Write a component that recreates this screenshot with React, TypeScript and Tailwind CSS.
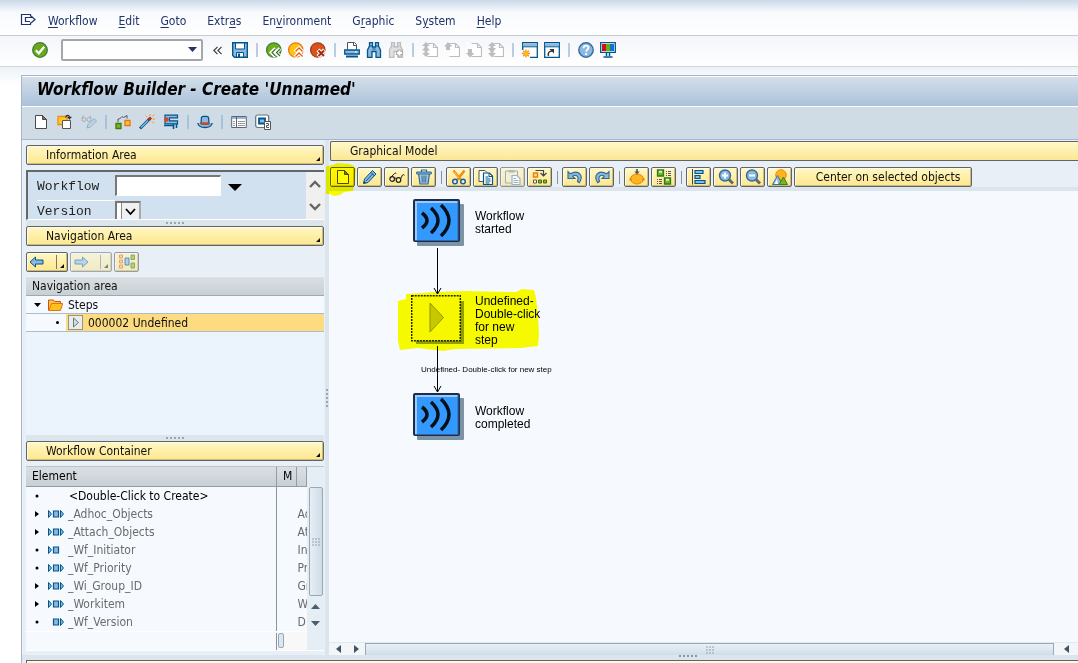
import React from "react";

type IconProps = { children: React.ReactNode; size?: string; box?: string };

function Icon({ children, size = "size-4", box = "0 0 16 16" }: IconProps) {
  return (
    <svg className={`${size} block shrink-0`} viewBox={box} fill="none" aria-hidden="true">
      {children}
    </svg>
  );
}

const BLUE = "#00578f";
const SKY = "#8fb8de";
const GREY = "#bdbdbd";

/* ---------- system toolbar icons ---------- */
const ExitMenuIcon = () => (
  <Icon>
    <path d="M10.500 3.500v-2h-9v10h9v-2" stroke="#20336b" strokeWidth="1.200" />
    <path d="M10 4.500H5.500v4H10" stroke="#20336b" strokeWidth="1.200" />
    <path d="M11 3l4 3.500-4 3.500M10 4.500h3" stroke="#20336b" strokeWidth="1.200" />
  </Icon>
);
const CheckIcon = () => (
  <Icon>
    <circle cx="8" cy="8" r="7.300" fill="#6aa818" stroke="#3e7d3e" strokeWidth="1.300" />
    <path d="M3.800 8.300l3 3 5.400-6.500" stroke="#fff" strokeWidth="2.200" />
  </Icon>
);
const SaveIcon = () => (
  <Icon>
    <path d="M.7.7h14.600v14.600H2.500L.7 13.500z" fill={SKY} stroke={BLUE} strokeWidth="1.400" />
    <path d="M3.500 1h9v6h-9z" fill="#fff" stroke={BLUE} />
    <path d="M4.500 10.500h7V15h-7z" fill="#fff" stroke={BLUE} />
    <path d="M6 11.500h2V15H6z" fill={BLUE} />
  </Icon>
);
const RoundIcon = ({ fill, edge, children }: { fill: string; edge: string; children: React.ReactNode }) => (
  <Icon>
    <circle cx="7.800" cy="8" r="7.200" fill={fill} stroke={edge} strokeWidth="1.300" />
    {children}
  </Icon>
);
const BackIcon = () => (
  <RoundIcon fill="#6fae1b" edge="#3f8040">
    <path d="M9.500 6.500L5.500 10.500l4 4M14 6.500l-4 4 4 4" stroke="#fff" strokeWidth="3.600" />
    <path d="M9.500 7L6 10.500 9.500 14M14 7l-3.500 3.500L14 14" stroke="#3d6b3a" strokeWidth="1.200" />
  </RoundIcon>
);
const UpIcon = () => (
  <RoundIcon fill="#ffc20e" edge="#e8791b">
    <path d="M7 10l4-4 4 4M7 15l4-4 4 4" stroke="#fff" strokeWidth="3.600" />
    <path d="M7.500 9.500L11 6l3.500 3.500M7.500 14.500L11 11l3.500 3.500" stroke="#d9600f" strokeWidth="1.300" />
  </RoundIcon>
);
const CancelIcon = () => (
  <RoundIcon fill="#d8541a" edge="#a93b22">
    <path d="M8 8l6.500 6.500M14.500 8L8 14.500" stroke="#fff" strokeWidth="4.200" />
    <path d="M8.500 8.500l5.500 5.500M14 8.500L8.500 14" stroke="#a12a12" strokeWidth="2" />
  </RoundIcon>
);
const PrintIcon = () => (
  <Icon>
    <path d="M3.500 7.500v-7h7l2 2v5" fill="#fff" stroke="#555" />
    <path d="M9.500.5v3h3" stroke="#555" />
    <path d="M.7 8h14.600v4H.7z" fill={SKY} stroke={BLUE} strokeWidth="1.300" />
    <path d="M2 14.500h12" stroke={BLUE} strokeWidth="2" />
    <path d="M11 10h2" stroke="#fff" />
  </Icon>
);
const binoculars = "M1.500 15.500V8l2-4V.7h3V5h3V.7h3V4l2 4v7.500h-4.500V9.500h-4v6z";
const FindIcon = () => (
  <Icon>
    <path d={binoculars} fill={SKY} stroke={BLUE} strokeWidth="1.300" />
    <path d="M3.500 4h3M9.500 4h3M6.500 7h3" stroke={BLUE} />
  </Icon>
);
const FindNextIcon = () => (
  <Icon>
    <path d={binoculars} fill="#e1e1e1" stroke={GREY} strokeWidth="1.300" />
    <path d="M3.500 4h3M9.500 4h3" stroke={GREY} />
    <path d="M11.500 7.500v7M8 11h7" stroke="#aaa" strokeWidth="4" />
    <path d="M11.500 8.500v5M9 11h5" stroke="#fff" strokeWidth="2" />
  </Icon>
);
const PageMoveIcon = ({ up, down, double }: { up?: boolean; down?: boolean; double?: boolean }) => (
  <Icon>
    <path d="M5.500 1.500h6l4 4v9h-10" fill="#fff" stroke={GREY} strokeWidth="1.200" />
    <path d="M11.500 1.500v4h4" stroke={GREY} strokeWidth="1.200" />
    {!double && <path d="M0 0h5v16H0z" fill="#fafbfd" />}
    {!double && up && <path d="M4 0l4.500 4.500h-2.500V8h-4V4.500H0z" fill={GREY} />}
    {!double && down && <path d="M4 15.500L8.500 11h-2.500V7h-4v4H0z" fill={GREY} />}
    {double && up && <path d="M4 0l4 4H5.500v1.500L8 8.500H5.500V11H8l-4 4-4-4h2.500V8.500H0l2.500-3V4H0z" fill={GREY} />}
    {double && down && <path d="M4 0l4 4H5.500v2H8L5.500 9.500V11H8l-4 4.500L0 11h2.500V9.500L0 6h2.500V4H0z" fill={GREY} />}
  </Icon>
);
const windowFrame = (
  <>
    <path d="M.7.7h14.600v14.600H.7z" fill="#fff" stroke={BLUE} strokeWidth="1.300" />
    <path d="M1.300 1.300h13.400v3H1.300z" fill={SKY} />
    <path d="M1 4.800h14" stroke={BLUE} />
  </>
);
const NewSessionIcon = () => (
  <Icon>
    {windowFrame}
    <path d="M0 8h8v8H0z" fill="#fff" />
    <path d="M4 7.500v8M0 11.500h8M1.200 8.700l5.600 5.600M6.800 8.700l-5.600 5.600" stroke="#ee8a0a" strokeWidth="1.300" />
    <circle cx="4" cy="11.500" r="2.300" fill="#ffb81c" />
  </Icon>
);
const ShortcutIcon = () => (
  <Icon>
    {windowFrame}
    <path d="M4.500 14c-1-3 .5-5 4-5" stroke="#333" strokeWidth="1.500" />
    <path d="M5.500 7H10v4.500z" fill="#333" />
  </Icon>
);
const HelpIcon = () => (
  <Icon>
    <circle cx="8" cy="8" r="7.200" fill={SKY} stroke="#2e6da4" strokeWidth="1.400" />
    <path d="M5.500 6.200c0-3.400 5-3.400 5-.4 0 1.700-2.400 1.900-2.400 4" stroke="#fff" strokeWidth="1.800" />
    <path d="M7.200 11.200h1.900v1.800H7.200z" fill="#fff" />
  </Icon>
);
const LayoutIcon = () => (
  <Icon>
    <path d="M.7.700h14.600v9.600H.7z" fill="#fff" stroke={BLUE} strokeWidth="1.300" />
    <path d="M2 2h4v7H2z" fill="#d40f14" />
    <path d="M6 2h4v7H6z" fill="#6cae12" />
    <path d="M10 2h4v7h-4z" fill="#0a78c8" />
    <path d="M6.500 10.500v3.500M9.500 10.500v3.500M3.500 15h9" stroke={BLUE} strokeWidth="1.500" />
  </Icon>
);

/* ---------- application toolbar icons ---------- */
const NewDocIcon = () => (
  <Icon>
    <path d="M2.500 1.500h7l4 4v9h-11z" fill="#fff" stroke="#4a4a4a" />
    <path d="M9.500 1.500v4h4z" fill="#777" stroke="#4a4a4a" />
  </Icon>
);
const OtherObjectIcon = () => (
  <Icon>
    <path d="M1 2.500h9v8H1z" fill="#ffc72c" stroke="#f08c10" strokeWidth="1.300" />
    <path d="M5.500 6.500h8v8h-8z" fill="#fff" stroke="#555" />
    <path d="M8.500 3.500C9 .8 12 .8 12.500 3" stroke="#333" strokeWidth="1.200" />
    <path d="M10 2.800h5L12.500 5.800z" fill="#333" />
  </Icon>
);
const DisplayChangeIcon = () => (
  <Icon>
    <circle cx="3" cy="5.500" r="2" stroke="#a8adb2" />
    <circle cx="8" cy="5.500" r="2" stroke="#a8adb2" />
    <path d="M1 4.500L2.500 1.500M10 4.500L9 1.500" stroke="#a8adb2" />
    <path d="M6 14l1-3.500 6-6L15.500 7l-6 6z" fill="#bcd3e4" stroke="#8fb2c9" />
  </Icon>
);
const HierarchyIcon = () => (
  <Icon>
    <path d="M1 9.500h5v5H1z" fill="#7cb518" stroke="#3e7a10" strokeWidth="1.300" />
    <path d="M10 6.500h5v5h-5z" fill="#ffc72c" stroke="#e8741a" strokeWidth="1.300" />
    <path d="M3 8V5h1.500L7 2.500 8.500 3.500 12 1.500v3" stroke="#555" />
  </Icon>
);
const WandIcon = () => (
  <Icon>
    <path d="M1 14.500L11 4.500" stroke={BLUE} strokeWidth="3" />
    <path d="M2 13.500L9 6.500" stroke={SKY} strokeWidth="1.200" />
    <path d="M9.500 6L12 3.500" stroke="#cc2222" strokeWidth="3" />
    <path d="M8 3L6.500 1.500M11 2V0M13.500 2.500L15.500.5M13.500 5H16M13 7.500l2 2" stroke="#f09a10" />
  </Icon>
);
const TestIcon = () => (
  <Icon>
    <path d="M2 1.200h12.500v2.600H6.500v3h8v3H2z" fill={SKY} stroke={BLUE} strokeWidth="1.200" />
    <path d="M1 11.500h9.500M10.500 10v5M13.500 10v4" stroke={BLUE} strokeWidth="1.600" />
    <circle cx="3.500" cy="5.500" r="2.200" fill="#d8422b" />
  </Icon>
);
const HatIcon = () => (
  <Icon>
    <path d="M.8 9c1 6 13.400 6 14.400 0" fill={SKY} stroke={BLUE} strokeWidth="1.300" />
    <path d="M4 9.500l.5-6C5 1.500 7 2.500 8 2.500s3-1 3.500 1l.5 6z" fill={SKY} stroke={BLUE} strokeWidth="1.300" />
    <path d="M4 8.500h8v2.500H4z" fill="#d0441e" />
  </Icon>
);
const ListIcon = () => (
  <Icon>
    <path d="M.7 2.500h14.600v11H.7z" fill="#fff" stroke="#5b6670" />
    <path d="M1 3h14v2H1z" fill={SKY} />
    <path d="M5.500 3v10" stroke="#5b6670" />
    <path d="M2 7.500h2M2 9.500h2M2 11.500h2M7 7.500h7M7 9.500h7M7 11.500h7" stroke="#999" />
  </Icon>
);
const WindowTwoIcon = () => (
  <Icon>
    <rect x=".7" y="1" width="13" height="12.500" rx="2" fill="#fff" stroke="#62717c" strokeWidth="1.200" />
    <path d="M4 4.500h6v5H4z" fill={SKY} stroke={BLUE} strokeWidth="1.800" />
    <path d="M9.500 7.500h6v8h-6z" fill="#fff" stroke="#555" />
    <path d="M11 9.500h2.500v2H11.500v2H14" stroke="#555" />
  </Icon>
);

/* ---------- graph toolbar icons ---------- */
const PencilIcon = () => (
  <Icon>
    <path d="M1.500 14.500l1-4.500 8-8.500 3.500 3.500-8 8.500z" fill={SKY} stroke={BLUE} />
    <path d="M9 3.500L12.500 7M4 12l7-7.500" stroke={BLUE} />
    <path d="M1.500 14.500l.6-2.500 2 2z" fill="#333" />
  </Icon>
);
const GlassesIcon = () => (
  <Icon>
    <circle cx="3.200" cy="10" r="2.300" stroke="#222" strokeWidth="1.200" />
    <circle cx="9.500" cy="11" r="2.300" stroke="#222" strokeWidth="1.200" />
    <path d="M5.300 9.500c.8-.8 1.500-.6 2 .5M1.200 9L5.500 4.500c.8-.8 1.500-.5 1.500.5M11.500 10L13.500 6c.5-.8 1.500-.6 1.800.5" stroke="#222" />
  </Icon>
);
const TrashIcon = () => (
  <Icon>
    <path d="M2.500 4.500h11l-1.500 10.500H4z" fill="#a9c6e0" stroke="#2b6a98" strokeWidth="1.200" />
    <path d="M.7 3h14.600v2H.7z" fill={SKY} stroke="#2b6a98" />
    <path d="M5.500 3V1h5v2" stroke="#2b6a98" strokeWidth="1.200" />
    <path d="M6 6.500l.3 7M10 6.500l-.3 7M8 6.500v7" stroke="#2b6a98" />
  </Icon>
);
const CutIcon = () => (
  <Icon>
    <path d="M2.500 1.500l7 9M13.500 1.500l-7 9" stroke="#f08a12" strokeWidth="2.400" />
    <path d="M3 2.500l5 6.500" stroke="#ffc94d" />
    <circle cx="4" cy="12.500" r="2.300" fill="#e7eff7" stroke="#205f94" strokeWidth="1.500" />
    <circle cx="12" cy="12.500" r="2.300" fill="#e7eff7" stroke="#205f94" strokeWidth="1.500" />
  </Icon>
);
const CopyIcon = () => (
  <Icon>
    <path d="M1 1.500h6l3 3v8H1z" fill="#fff" stroke="#555" />
    <path d="M5.500 4h6l3 3v8.500h-9z" fill="#fff" stroke={BLUE} strokeWidth="1.200" />
    <path d="M11 4v3.500h3.500M7.500 8h3M7.500 10h5M7.500 12h5M7.500 14h4" stroke={BLUE} />
  </Icon>
);
const PasteIcon = () => (
  <Icon>
    <path d="M.5 2h12v12H.5z" fill="#f9eec2" stroke="#888" />
    <path d="M3.500 1h6v2.500h-6z" fill="#999" />
    <path d="M7 6.500h5l3 3v6H7z" fill="#fff" stroke="#6f98a8" strokeWidth="1.200" />
    <path d="M8.500 9.500h2.500M8.500 11.500h5M8.500 13.500h5" stroke="#6f98a8" />
  </Icon>
);
const BlockIcon = () => (
  <Icon>
    <path d="M1.500 4h4v4h-4z" fill="#ffe08a" stroke="#ee7c10" strokeWidth="1.400" />
    <path d="M1.500 11h3v3h-3z" fill="#fff" stroke="#555" />
    <path d="M6.500 11h3v3h-3zM11.500 11h3v3h-3z" fill="#87ba25" stroke="#3d6a15" />
    <path d="M3.500 1.500h8V6M8.500 4l3 3 3-3" stroke="#444" strokeWidth="1.200" />
  </Icon>
);
const UndoIcon = ({ flip }: { flip?: boolean }) => (
  <Icon>
    <g transform={flip ? "translate(16 0) scale(-1 1)" : undefined}>
      <path d="M1 2.500v7h7L5.700 7.300C8.500 5.200 12.500 6.500 10.500 12.500l1.800 1.200C17 7 12 0 3.300 4.800z" fill={SKY} stroke="#2b6a98" strokeWidth="1.100" />
    </g>
  </Icon>
);
const CheckSyntaxIcon = () => (
  <Icon>
    <ellipse cx="8" cy="10" rx="6.500" ry="5" fill="#ffb51f" stroke="#ec8010" />
    <path d="M.5 10.500h2M13.500 10.500h2" stroke="#e77c10" strokeWidth="2" />
    <path d="M8 0v4" stroke="#555" strokeWidth="1.600" />
    <path d="M5.300 2.500h5.400L8 5.500z" fill="#555" />
  </Icon>
);
const OptionsIcon = () => (
  <Icon>
    <path d="M1.500 1h6v6h-6zM8.500 9h6v6h-6z" fill="#77b424" stroke="#2e7b18" strokeWidth="1.300" />
    <path d="M3 1.700h3v2H3zM10 9.700h3v2h-3z" fill="#d8efc3" />
    <path d="M10 2.500h1M12 2.500h3M10 4.500h1M12 4.500h3M10 6.500h1M12 6.500h3M1 10.500h1M3 10.500h3M1 12.500h1M3 12.500h3M1 14.500h1M3 14.500h3" stroke="#555" />
  </Icon>
);
const AlignIcon = () => (
  <Icon>
    <path d="M1.500 0v15.500" stroke="#444" />
    <path d="M4 1.500h8v3H4zM4 6.500h5v3H4zM4 11.500h10v3H4z" fill={SKY} stroke={BLUE} strokeWidth="1.200" />
  </Icon>
);
const ZoomIcon = ({ plus }: { plus?: boolean }) => (
  <Icon>
    <circle cx="7" cy="6.500" r="5.500" fill={SKY} stroke="#2d6b9e" strokeWidth="1.400" />
    <path d={plus ? "M4 6.500h6M7 3.500v6" : "M4 6.500h6"} stroke="#fff" strokeWidth="2" />
    <path d="M11 10.500l4 4" stroke="#666" strokeWidth="3" />
  </Icon>
);
const OverviewIcon = () => (
  <Icon>
    <circle cx="9" cy="6" r="5.300" fill="#ffb31a" stroke="#ef8b12" />
    <path d="M.5 15.500L5.500 6.500l5 9z" fill={SKY} stroke="#34769f" />
    <path d="M2.500 15l2.500-5 1 5z" fill="#fff" />
    <path d="M7 15.500L11.500 8l4 7.500z" fill="#78b32a" stroke="#3d7d1c" />
  </Icon>
);

/* ---------- shared parts ---------- */
const raised =
  "border border-[#5f6468] rounded-[2px] bg-linear-to-b from-[#fff8c8] via-[#ffefa5] to-[#fbe794] shadow-[inset_1px_1px_0_#fffbe2,inset_-1px_-1px_0_#cdbb77]";

function IconButton({ label, children }: { label: string; children: React.ReactNode }) {
  return (
    <button aria-label={label} className="block size-4 shrink-0">
      {children}
    </button>
  );
}

const Divider = () => <span className="mx-[2px] h-[14px] w-[2px] shrink-0 bg-[#b9cde2]" />;

function SectionHeader({ title }: { title: string }) {
  return (
    <button className={`${raised} relative flex h-5 w-full shrink-0 items-center pl-[19px] text-left`}>
      {title}
      <Corner />
    </button>
  );
}

const Corner = () => (
  <svg className="absolute right-[3px] bottom-[3px] size-1" viewBox="0 0 4 4" aria-hidden="true">
    <path d="M4 0v4H0z" fill="#111" />
  </svg>
);

const Dots = () => (
  <div className="flex h-[6px] shrink-0 items-center justify-center gap-[2px] bg-[#dce5ec]">
    {[0, 1, 2, 3, 4].map((n) => (
      <span key={n} className="size-[2px] bg-[#98a5b3]" />
    ))}
  </div>
);

const menus: [string, string, string][] = [
  ["", "W", "orkflow"],
  ["", "E", "dit"],
  ["", "G", "oto"],
  ["Extr", "a", "s"],
  ["En", "v", "ironment"],
  ["G", "r", "aphic"],
  ["S", "y", "stem"],
  ["", "H", "elp"],
];

function MenuBar() {
  return (
    <nav className="flex h-9 shrink-0 items-center border-b border-[#c3cbd8] bg-linear-to-b from-[#cbd9e9] via-[#f8fafd] via-35% to-white pt-[6px] pl-5 text-[#20336b]">
      <button aria-label="Menu" className="mr-3"><ExitMenuIcon /></button>
      <div className="flex gap-[21px]">
        {menus.map(([a, b, c]) => (
          <button key={a + b + c} className="whitespace-pre">
            {a}
            <span className="underline underline-offset-2">{b}</span>
            {c}
          </button>
        ))}
      </div>
    </nav>
  );
}

function SystemToolbar() {
  return (
    <div className="flex h-[31px] shrink-0 items-center gap-[6px] border-b border-[#cdd5e0] bg-linear-to-b from-[#f4f6fa] to-white pb-[2px] pl-8">
      <IconButton label="Enter"><CheckIcon /></IconButton>
      <div className="relative ml-[7px] h-[22px] w-[142px] shrink-0">
        <input aria-label="Command" className="h-full w-full rounded-[2px] border-2 border-[#a3a7ab] bg-white px-1 outline-none" />
        <svg className="absolute top-2 right-[6px] h-[5px] w-[9px]" viewBox="0 0 9 5" aria-hidden="true">
          <path d="M0 0h9L4.500 5z" fill="#20336b" />
        </svg>
      </div>
      <button aria-label="Hide command field" className="mx-1 block">
        <Icon size="size-[9px]" box="0 0 10 10">
          <path d="M5 1L1 5l4 4M9.500 1l-4 4 4 4" stroke="#444" strokeWidth="1.400" />
        </Icon>
      </button>
      <IconButton label="Save"><SaveIcon /></IconButton>
      <Divider />
      <IconButton label="Back"><BackIcon /></IconButton>
      <IconButton label="Exit"><UpIcon /></IconButton>
      <IconButton label="Cancel"><CancelIcon /></IconButton>
      <Divider />
      <IconButton label="Print"><PrintIcon /></IconButton>
      <IconButton label="Find"><FindIcon /></IconButton>
      <IconButton label="Find next"><FindNextIcon /></IconButton>
      <Divider />
      <IconButton label="First page"><PageMoveIcon up double /></IconButton>
      <IconButton label="Previous page"><PageMoveIcon up /></IconButton>
      <IconButton label="Next page"><PageMoveIcon down /></IconButton>
      <IconButton label="Last page"><PageMoveIcon down double /></IconButton>
      <Divider />
      <IconButton label="New session"><NewSessionIcon /></IconButton>
      <IconButton label="Create shortcut"><ShortcutIcon /></IconButton>
      <Divider />
      <IconButton label="Help"><HelpIcon /></IconButton>
      <IconButton label="Customize layout"><LayoutIcon /></IconButton>
    </div>
  );
}

function AppToolbar() {
  const bar = <span className="h-[14px] w-[2px] shrink-0 bg-[#aac3dc]" />;
  return (
    <div className="flex h-[33px] shrink-0 items-center gap-2 border-b border-[#a9b8c9] bg-[#cfdce6] pb-[2px] pl-[11px]">
      <IconButton label="Create new workflow"><NewDocIcon /></IconButton>
      <IconButton label="Other workflow"><OtherObjectIcon /></IconButton>
      <IconButton label="Display or change"><DisplayChangeIcon /></IconButton>
      {bar}
      <IconButton label="Hierarchy"><HierarchyIcon /></IconButton>
      <IconButton label="Generate"><WandIcon /></IconButton>
      <IconButton label="Test"><TestIcon /></IconButton>
      {bar}
      <IconButton label="Basic data"><HatIcon /></IconButton>
      {bar}
      <IconButton label="List"><ListIcon /></IconButton>
      <IconButton label="Second window"><WindowTwoIcon /></IconButton>
    </div>
  );
}

/* ---------- left column ---------- */
function InformationArea() {
  return (
    <form className="mt-[5px] flex h-[50px] shrink-0 overflow-hidden border-t-2 border-b border-l-2 border-t-[#62676c] border-b-white border-l-[#62676c] bg-[#d2e1ef] font-['Liberation_Mono',monospace] text-[13px] text-[#222]">
      <div className="flex-1 pt-[3px] pl-[9px]">
        <div className="flex h-[26px] items-start">
          <label htmlFor="wf" className="h-[26px] w-[78px] border-b border-white leading-6">Workflow</label>
          <input id="wf" className="h-[21px] w-[106px] border-t-2 border-r border-b border-l-2 border-t-[#777] border-r-white border-b-white border-l-[#777] bg-white outline-none" />
          <button type="button" aria-label="Choose workflow" className="mt-[9px] ml-[7px]">
            <svg className="block h-[7px] w-[14px]" viewBox="0 0 14 7"><path d="M0 0h14L7 7z" fill="#000" /></svg>
          </button>
        </div>
        <div className="flex items-start">
          <label htmlFor="ver" className="w-[78px] leading-[22px]">Version</label>
          <div className="relative">
            <select id="ver" className="block h-[22px] w-[26px] appearance-none border-2 border-[#777] border-r-[#aaa] bg-white" />
            <span className="pointer-events-none absolute top-[2px] right-[2px] flex h-[18px] w-[18px] items-center justify-center border-l border-[#888] bg-[#eef0f2]">
              <svg className="h-2 w-[11px]" viewBox="0 0 11 8" fill="none"><path d="M1 1l4.500 5L10 1" stroke="#000" strokeWidth="1.800" /></svg>
            </span>
          </div>
        </div>
      </div>
      <div className="flex w-[18px] flex-col items-center justify-between bg-[#f0f0f0] pt-2 pb-2">
        <svg className="h-2 w-3" viewBox="0 0 12 8" fill="none"><path d="M1 7l5-5 5 5" stroke="#666" strokeWidth="2.400" /></svg>
        <svg className="h-2 w-3" viewBox="0 0 12 8" fill="none"><path d="M1 1l5 5 5-5" stroke="#666" strokeWidth="2.400" /></svg>
      </div>
    </form>
  );
}

function ArrowButton({ label, back }: { label: string; back?: boolean }) {
  return (
    <button aria-label={label} className={`${raised} relative flex h-5 w-[42px] items-center ${back ? "" : "opacity-50"}`}>
      <svg className="ml-[2px] h-3 w-4" viewBox="0 0 16 12">
        <path
          d={back ? "M1 6l5.500-5v3H14v4H6.500v3z" : "M15 6L9.500 1v3H2v4h7.500v3z"}
          fill={SKY}
          stroke={BLUE}
        />
      </svg>
      <span className="absolute top-[2px] right-[10px] h-[14px] w-px bg-[#777]" />
      <Corner />
    </button>
  );
}

function NavigationArea() {
  return (
    <>
      <div className="mt-[6px] flex gap-[2px]">
        <ArrowButton label="Back in navigation" back />
        <ArrowButton label="Forward in navigation" />
        <button aria-label="Outline" className={`${raised} flex h-5 w-[25px] items-center justify-center opacity-60`}>
          <Icon>
            <path d="M.5 1h3v3h-3zM.5 6h3v3h-3zM.5 11h3v3h-3z" fill="#ffd071" stroke="#e06c10" />
            <path d="M6 4h4v7H6z" fill={SKY} stroke={BLUE} />
            <path d="M12 1h3.500v4.500H12zM12 9h3.500v5H12z" fill="#8abd3b" stroke="#4d7d15" />
          </Icon>
        </button>
      </div>
      <div className="mt-1 flex h-5 shrink-0 items-center border-t border-b border-t-[#eef3f7] border-b-[#9fa9b3] bg-linear-to-b from-[#dadfe3] to-[#c9d0d5] pl-[6px]">
        Navigation area
      </div>
      <ul className="min-h-0 flex-1 bg-[#ebf3fc]">
        <li className="flex h-[18px] items-center border-b border-[#a8bdd0] bg-[#f6fafe] pl-2">
          <svg className="h-1 w-[7px]" viewBox="0 0 7 4"><path d="M0 0h7L3.500 4z" fill="#000" /></svg>
          <svg className="mr-[5px] ml-[7px] h-3 w-[15px]" viewBox="0 0 15 12">
            <path d="M.5 11.500V1h5l1 1.500h6V5" fill="#ffc93c" stroke="#cf4e17" />
            <path d="M.8 11.500L3.500 4.500h11.200l-2.200 7z" fill="#ffbf1f" stroke="#e07414" />
          </svg>
          <span>Steps</span>
        </li>
        <li className="flex h-[18px] items-center border-b border-[#a8bdd0] bg-[#f6fafe]">
          <span className="w-10 pl-[30px]"><span className="block size-[3px] rounded-full bg-black" /></span>
          <a href="#step" className="flex h-full flex-1 items-center bg-[#fddb80] pl-[2px]">
            <svg className="mr-[5px] size-[15px]" viewBox="0 0 15 15">
              <path d="M.5.500h14v14H.5z" fill="#e8ecec" stroke="#444" strokeDasharray="1 1" />
              <path d="M5.500 3l5 4.500-5 4.500z" fill="#d4dedd" stroke="#667b7a" />
            </svg>
            000002 Undefined
          </a>
        </li>
      </ul>
    </>
  );
}

type Row = { name: string; expandable?: boolean; input?: boolean; output?: boolean; text: string };
const rows: Row[] = [
  { name: "_Adhoc_Objects", expandable: true, input: true, output: true, text: "Ad" },
  { name: "_Attach_Objects", expandable: true, input: true, output: true, text: "At" },
  { name: "_Wf_Initiator", input: true, text: "In" },
  { name: "_Wf_Priority", input: true, output: true, text: "Pr" },
  { name: "_Wi_Group_ID", expandable: true, input: true, output: true, text: "Gr" },
  { name: "_Workitem", expandable: true, input: true, output: true, text: "W" },
  { name: "_Wf_Version", output: true, text: "D" },
];

const Marker = ({ expandable }: { expandable?: boolean }) => (
  <svg className="size-[6px] shrink-0" viewBox="0 0 6 6" aria-hidden="true">
    {expandable ? <path d="M1 0v6l4-3z" fill="#000" /> : <circle cx="3" cy="3" r="1.500" fill="#000" />}
  </svg>
);

function WorkflowContainer() {
  const head = "border-r border-b border-[#929da8] bg-linear-to-b from-[#dadfe3] to-[#c9d0d5] font-normal";
  return (
    <div className="mt-[5px] flex h-[185px] shrink-0 overflow-hidden border-t border-b border-t-[#b9c4cf] border-b-white bg-[#e6eef5]">
      <div className="flex flex-1 flex-col overflow-hidden bg-[#f6fafe]">
        <table className="w-full table-fixed border-collapse text-[#6b6b6b]">
          <thead>
            <tr className="h-[19px] text-left text-black">
              <th className={`${head} pl-[6px]`}>Element</th>
              <th className={`${head} w-5 pl-[6px]`}>M</th>
              <th className={`${head} w-[10px]`} aria-label="Description" />
            </tr>
          </thead>
          <tbody>
            <tr className="h-[18px]">
              <td className="border-r border-[#8796a5] p-0">
                <span className="flex items-center pl-2 text-black">
                  <Marker />
                  <span className="pl-[29px]">&lt;Double-Click to Create&gt;</span>
                </span>
              </td>
              <td className="p-0" />
              <td className="p-0" />
            </tr>
            {rows.map((r) => (
              <tr key={r.name} className="h-[18px]">
                <td className="border-r border-[#8796a5] p-0">
                  <span className="flex items-center pl-2">
                    <Marker expandable={r.expandable} />
                    <svg className="mr-1 ml-2 h-2 w-4" viewBox="0 0 16 8" aria-hidden="true">
                      {r.input && <path d="M.5.500v7L3.500 4z" fill={SKY} stroke={BLUE} />}
                      <path d="M5.500 1h5v6h-5z" fill={SKY} stroke={BLUE} strokeWidth="1.200" />
                      {r.output && <path d="M12.500.500v7l3-3.500z" fill={SKY} stroke={BLUE} />}
                    </svg>
                    <span>{r.name}</span>
                  </span>
                </td>
                <td className="p-0" />
                <td className="overflow-hidden p-0 pl-px whitespace-nowrap">{r.text}</td>
              </tr>
            ))}
          </tbody>
        </table>
        <div className="flex flex-1 border-t border-white pt-px">
          <div className="flex-1 border-r border-[#8796a5]" />
          <div className="w-[30px] bg-[#f8f8f8]">
            <div className="ml-px h-[15px] w-[6px] rounded-[2px] border border-[#9aa8b6] bg-[#dbe6ef]" />
          </div>
        </div>
      </div>
      <div className="flex w-[17px] shrink-0 flex-col items-center pt-5">
        <div className="flex h-[109px] w-[14px] items-center justify-center rounded-[2px] border border-[#9aa8b6] bg-linear-to-r from-[#e6eff6] to-[#cedbe6]">
          <Grip />
        </div>
        <svg className="mt-2 h-[5px] w-[9px]" viewBox="0 0 9 5"><path d="M0 5h9L4.500 0z" fill="#4a5f70" /></svg>
        <svg className="mt-3 h-[5px] w-[9px]" viewBox="0 0 9 5"><path d="M0 0h9L4.500 5z" fill="#4a5f70" /></svg>
      </div>
    </div>
  );
}

const Grip = () => (
  <svg className="size-2" viewBox="0 0 8 8" aria-hidden="true">
    <path d="M0 1h2M3 1h2M6 1h2M0 4h2M3 4h2M6 4h2M0 7h2M3 7h2M6 7h2" stroke="#94a4b3" />
  </svg>
);

/* ---------- right column ---------- */
function GraphButton({ label, children, disabled }: { label: string; children: React.ReactNode; disabled?: boolean }) {
  return (
    <button aria-label={label} disabled={disabled} className={`${raised} flex h-5 w-[25px] shrink-0 items-center justify-center ${disabled ? "opacity-65" : ""}`}>
      {children}
    </button>
  );
}

const GraphDivider = () => (
  <span className="flex h-5 w-[6px] shrink-0 items-center justify-center"><span className="h-[13px] w-px bg-[#8b9298]" /></span>
);

function GraphToolbar() {
  return (
    <div className="flex h-[30px] shrink-0 items-end gap-[2px] border-b-4 border-[#dce5ec] pl-px">
      <div className="relative">
        <GraphButton label="New"><NewDocIcon /></GraphButton>
        <svg className="pointer-events-none absolute -top-1 -left-1 z-10 h-[35px] w-[31px] mix-blend-multiply" viewBox="0 0 31 35" aria-hidden="true">
          <path d="M1 3l6-1 4-2 13 1 4 2 2 3-1 11-2 11-9 1-4 3-6 1-4-2H0V4z" fill="#ff0" />
        </svg>
      </div>
      <GraphButton label="Change"><PencilIcon /></GraphButton>
      <GraphButton label="Display"><GlassesIcon /></GraphButton>
      <GraphButton label="Delete"><TrashIcon /></GraphButton>
      <GraphDivider />
      <GraphButton label="Cut"><CutIcon /></GraphButton>
      <GraphButton label="Copy"><CopyIcon /></GraphButton>
      <GraphButton label="Paste" disabled><PasteIcon /></GraphButton>
      <GraphButton label="Block"><BlockIcon /></GraphButton>
      <GraphDivider />
      <GraphButton label="Undo"><UndoIcon /></GraphButton>
      <GraphButton label="Redo"><UndoIcon flip /></GraphButton>
      <GraphDivider />
      <GraphButton label="Check"><CheckSyntaxIcon /></GraphButton>
      <GraphButton label="Options"><OptionsIcon /></GraphButton>
      <GraphDivider />
      <GraphButton label="Align"><AlignIcon /></GraphButton>
      <GraphButton label="Zoom in"><ZoomIcon plus /></GraphButton>
      <GraphButton label="Zoom out"><ZoomIcon /></GraphButton>
      <GraphButton label="Overview"><OverviewIcon /></GraphButton>
      <button className={`${raised} h-5 w-[178px] shrink-0 pl-[10px] text-center whitespace-nowrap`}>Center on selected objects</button>
    </div>
  );
}

const EventNode = () => (
  <svg className="block h-[49px] w-[52px]" viewBox="0 0 52 49" aria-hidden="true">
    <rect x="4" y="5" width="47" height="42" rx="1" fill="#7c93a5" />
    <rect x="1" y="1" width="45" height="41" rx="1" fill="#3399ff" stroke="#1c2c4a" strokeWidth="2" />
    <path d="M3 41V3h42" stroke="#9cc9f5" strokeWidth="2" fill="none" />
    <path d="M45 2v39.500H2" stroke="#2f66a5" strokeWidth="1" fill="none" />
    <path d="M9 14q10 7.500 0 15M18 9q14 12.500 0 25M28 6q16 15.500 0 31" stroke="#061018" strokeWidth="3.500" fill="none" />
  </svg>
);

function Canvas() {
  const label = "absolute left-[146px] w-20 text-[12px] leading-[13px]";
  return (
    <div className="relative min-h-0 flex-1 overflow-hidden bg-[#f6faff] font-['Liberation_Sans',sans-serif] text-black">
      <svg className="absolute top-0 left-0 h-60 w-64" viewBox="0 0 256 240" fill="none" aria-hidden="true">
        <path d="M108.500 57v46M105 97l3.500 6 3.500-6M108.500 155v46M105 195l3.500 6 3.500-6" stroke="#000" />
      </svg>
      <div className="absolute top-2 left-[84px]"><EventNode /></div>
      <p className={`${label} top-[19px]`}>Workflow started</p>
      <svg className="absolute top-[104px] left-[82px] h-[50px] w-[54px]" viewBox="0 0 54 50" aria-hidden="true">
        <path d="M5 6h48v43H5z" fill="#90a0b0" />
        <path d="M.7.700h48.600v45H.7z" fill="#f7f7f7" stroke="#222" strokeWidth="1.500" strokeDasharray="2 1" />
        <path d="M19 8v29l13.500-14.500z" fill="#c8c8bd" stroke="#939393" />
      </svg>
      <p className={`${label} top-[104px]`}>
        Undefined-
        <br />
        Double-click
        <br />
        for new
        <br />
        step
      </p>
      <svg className="absolute top-[97px] left-[69px] h-[64px] w-[143px] mix-blend-multiply" viewBox="0 0 143 64" aria-hidden="true">
        <path d="M8 6l30-2 30-1 50 1 6-3 12 1 2 8 2 17 1 20-1 11-18 2-65 1-12 2-25-3-18 2-2-9V13l8-2z" fill="#ff0" />
      </svg>
      <p className="absolute top-[174px] left-[92px] text-[8px] leading-[10px] whitespace-nowrap">Undefined- Double-click for new step</p>
      <div className="absolute top-[202px] left-[84px]"><EventNode /></div>
      <p className={`${label} top-[214px]`}>Workflow completed</p>
    </div>
  );
}

const Arrow = ({ right }: { right?: boolean }) => (
  <svg className="h-2 w-[5px]" viewBox="0 0 5 8" aria-hidden="true">
    <path d={right ? "M0 0v8l5-4z" : "M5 0v8L0 4z"} fill="#405465" />
  </svg>
);

export default function App() {
  return (
    <div className="flex h-screen min-h-[600px] flex-col overflow-hidden bg-white font-['DejaVu_Sans_Condensed','DejaVu_Sans',sans-serif] text-[12px] leading-[18px] text-[#111]">
      <MenuBar />
      <SystemToolbar />
      <div className="flex min-h-0 flex-1 bg-linear-to-b from-[#eef2f8] to-white to-3% pt-2 pl-[21px]">
        <main className="flex min-w-0 flex-1 flex-col border-t border-l border-[#a9b4cb] bg-[#e8eff6]">
          <h1 className="flex h-[31px] shrink-0 items-center border-t border-b border-white bg-linear-to-b from-[#d3dfea] to-[#abc2da] pb-[5px] pl-[15px] text-[17px] font-bold text-black italic">
            Workflow Builder - Create 'Unnamed'
          </h1>
          <AppToolbar />
          <div className="flex min-h-0 flex-1">
            <aside className="flex w-[303px] shrink-0 flex-col pt-[5px] pr-px pl-1">
              <SectionHeader title="Information Area" />
              <InformationArea />
              <Dots />
              <SectionHeader title="Navigation Area" />
              <NavigationArea />
              <Dots />
              <SectionHeader title="Workflow Container" />
              <WorkflowContainer />
              <div className="h-1 shrink-0" />
            </aside>
            <div className="flex w-1 shrink-0 flex-col items-center justify-center gap-[2px] bg-[#dce5ec]">
              {[0, 1, 2, 3, 4].map((n) => (
                <span key={n} className="size-[2px] bg-[#98a5b3]" />
              ))}
            </div>
            <section className="flex min-w-0 flex-1 flex-col">
              <h2 className="mt-px ml-px flex h-5 shrink-0 items-center rounded-l-[2px] border border-r-0 border-[#5f6468] bg-linear-to-b from-[#fff8c8] to-[#fbe794] pl-[19px]">
                Graphical Model
              </h2>
              <GraphToolbar />
              <Canvas />
              <div className="flex h-[13px] shrink-0 items-center border-t border-[#e2e8ef] bg-[#f3f6f9]">
                <button aria-label="Scroll left" className="flex w-[18px] justify-center"><Arrow /></button>
                <button aria-label="Scroll right" className="flex w-[18px] justify-center"><Arrow right /></button>
                <div className="flex h-full flex-1 items-center justify-center border-t border-r border-l border-[#9ba7b4] bg-linear-to-b from-[#e9f1f7] to-[#cfdde8]">
                  <Grip />
                </div>
                <button aria-label="Scroll left end" className="flex w-6 justify-center"><Arrow /></button>
              </div>
            </section>
          </div>
          <div className="flex h-[5px] shrink-0 justify-center gap-[2px] bg-[#dce5ec] pl-[276px]">
            {[0, 1, 2, 3, 4].map((n) => (
              <span key={n} className="size-[2px] bg-[#8797a7]" />
            ))}
          </div>
          <div className="ml-1 h-[3px] shrink-0 border-t border-l border-[#5f6468] bg-[#fffbe0]" />
        </main>
      </div>
    </div>
  );
}
